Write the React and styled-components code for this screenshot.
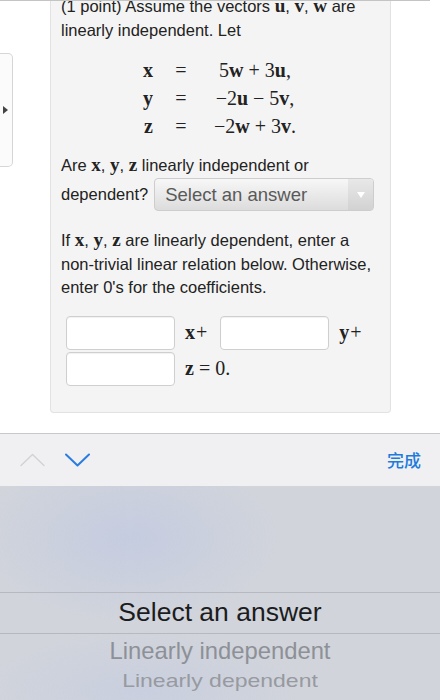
import styled, { createGlobalStyle } from "styled-components";

const Global = createGlobalStyle`
  html, body {
    margin: 0;
    padding: 0;
    background: #ffffff;
  }
  body {
    font-family: "Liberation Sans", Arial, sans-serif;
    color: #222;
  }
`;

const Page = styled.div`
  width: 440px;
  height: 700px;
  overflow: hidden;
  display: flex;
  flex-direction: column;
`;

const TopRule = styled.div`
  height: 1px;
  margin-right: 10px;
  background: #c4c4c4;
  position: relative;
  z-index: 1;
`;

const Main = styled.div`
  display: flex;
  align-items: flex-start;
`;

const SideTab = styled.div`
  width: 13px;
  height: 114px;
  margin-top: 52px;
  background: #fbfbfb;
  border: 1px solid #d6d6d6;
  border-left: none;
  border-radius: 0 5px 5px 0;
  display: flex;
  align-items: center;
  padding-left: 3px;
  box-sizing: border-box;

  &::before {
    content: "";
    border-left: 5px solid #444;
    border-top: 4px solid transparent;
    border-bottom: 4px solid transparent;
  }
`;

const Panel = styled.div`
  margin-left: 37px;
  width: 341px;
  box-sizing: border-box;
  background: #f4f4f4;
  border: 1px solid #e2e2e2;
  border-top: none;
  border-radius: 0 0 4px 4px;
  padding: 0 10px 26px 10px;
  font-size: 16.5px;
`;

const Para = styled.div`
  line-height: ${(p) => p.$lh || 24}px;
  margin-top: ${(p) => p.$mt || 0}px;
`;

const Vec = styled.b`
  font-family: "Liberation Serif", "Times New Roman", serif;
  font-weight: 700;
  font-size: 1.16em;
`;

const MathText = styled.span`
  font-family: "Liberation Serif", "Times New Roman", serif;
  font-size: 20px;
  white-space: nowrap;
`;

const EqTable = styled.div`
  margin-top: 14px;
  display: grid;
  grid-template-columns: 92px 56px 92px;
  grid-auto-rows: 28px;
  align-items: center;
  font-family: "Liberation Serif", "Times New Roman", serif;
  font-size: 20px;
`;

const EqLeft = styled.div`
  text-align: right;
`;

const EqMid = styled.div`
  text-align: center;
`;

const EqRight = styled.div`
  text-align: center;
  white-space: nowrap;
`;

const Op = styled.span`
  margin: 0 ${(p) => p.$gap || 5}px;
`;

const SelectRow = styled.div`
  margin-top: 1px;
  display: flex;
  align-items: center;
  gap: 6px;
`;

const SelectBox = styled.div`
  width: 220px;
  height: 33px;
  box-sizing: border-box;
  border: 1px solid #cdcdcd;
  border-radius: 4px;
  background: linear-gradient(#f7f7f7, #dcdcdc);
  display: flex;
  align-items: center;
  overflow: hidden;
`;

const SelectLabel = styled.span`
  flex: 1;
  padding-left: 10px;
  font-size: 18.5px;
  color: #595959;
`;

const SelectArrow = styled.span`
  width: 25px;
  height: 100%;
  background: linear-gradient(#e8e8e8, #d2d2d2);
  display: flex;
  align-items: center;
  justify-content: center;

  &::before {
    content: "";
    border-top: 6px solid #fff;
    border-left: 4px solid transparent;
    border-right: 4px solid transparent;
  }
`;

const InputRow = styled.div`
  margin-top: ${(p) => p.$mt}px;
  display: flex;
  align-items: center;
  padding-left: 5px;
`;

const Field = styled.div`
  width: 109px;
  height: 34px;
  box-sizing: border-box;
  background: #fff;
  border: 1px solid #cfcfcf;
  border-radius: 4px;
  box-shadow: inset 0 1px 1px rgba(0, 0, 0, 0.06);
`;

const FieldLabel = styled(MathText)`
  margin: 0 12px 0 10px;
`;

const Toolbar = styled.div`
  margin-top: 20px;
  height: 52px;
  border-top: 1px solid #c8c8cc;
  background: #f0f0f2;
  display: flex;
  align-items: center;
  padding: 0 19px 0 20px;
  gap: 19px;
`;

const Done = styled.span`
  margin-left: auto;
  font-family: "Noto Sans CJK SC", sans-serif;
  font-size: 17px;
  font-weight: 500;
  color: #1e7bdc;
`;

const Picker = styled.div`
  flex: 1;
  display: flex;
  flex-direction: column;
  background:
    radial-gradient(ellipse 150px 85px at 130px 52px, #c5cce0 0%, rgba(197, 204, 224, 0) 100%),
    radial-gradient(ellipse 160px 60px at 140px 205px, #c9cfdf 0%, rgba(201, 207, 223, 0) 100%),
    #d1d4db;
`;

const PickerSpacer = styled.div`
  height: 106px;
`;

const PickerSelected = styled.div`
  height: 40px;
  border-top: 1px solid #b6b9bf;
  border-bottom: 1px solid #b6b9bf;
  display: flex;
  align-items: center;
  justify-content: center;
  font-size: 26.5px;
  color: #1c1c1e;
`;

const PickerOption = styled.div`
  height: ${(p) => p.$h}px;
  display: flex;
  align-items: center;
  justify-content: center;
  font-size: ${(p) => p.$size}px;
  color: ${(p) => p.$color};
  transform: scaleY(${(p) => p.$squash || 1});
`;

const Chevron = ({ up }) => (
  <svg width="26" height="14" viewBox="0 0 26 14">
    <polyline
      points={up ? "1,12.5 12.5,1.5 24,12.5" : "1,1.5 12.5,12.5 24,1.5"}
      fill="none"
      stroke={up ? "#d2d2d4" : "#2a7de0"}
      strokeWidth={up ? 1.4 : 2}
      strokeLinecap="round"
      strokeLinejoin="round"
    />
  </svg>
);

export default function App() {
  return (
    <Page>
      <Global />
      <TopRule />
      <Main>
        <SideTab />
        <Panel>
          <Para style={{ marginTop: -7 }}>
            (1 point) Assume the vectors <Vec>u</Vec>, <Vec>v</Vec>, <Vec>w</Vec> are
            <br />
            linearly independent. Let
          </Para>

          <EqTable>
            <EqLeft><b>x</b></EqLeft>
            <EqMid>=</EqMid>
            <EqRight>5<b>w</b><Op>+</Op>3<b>u</b>,</EqRight>

            <EqLeft><b>y</b></EqLeft>
            <EqMid>=</EqMid>
            <EqRight>−2<b>u</b><Op>−</Op>5<b>v</b>,</EqRight>

            <EqLeft><b>z</b></EqLeft>
            <EqMid>=</EqMid>
            <EqRight>−2<b>w</b><Op>+</Op>3<b>v</b>.</EqRight>
          </EqTable>

          <Para $mt={13}>
            Are <Vec>x</Vec>, <Vec>y</Vec>, <Vec>z</Vec> linearly independent or
          </Para>
          <SelectRow>
            dependent?
            <SelectBox>
              <SelectLabel>Select an answer</SelectLabel>
              <SelectArrow />
            </SelectBox>
          </SelectRow>

          <Para $mt={17} $lh={23.5}>
            If <Vec>x</Vec>, <Vec>y</Vec>, <Vec>z</Vec> are linearly dependent, enter a
            non-trivial linear relation below. Otherwise, enter 0's for the
            coefficients.
          </Para>

          <InputRow $mt={16}>
            <Field />
            <FieldLabel><b>x</b><Op $gap={1}>+</Op></FieldLabel>
            <Field />
            <FieldLabel><b>y</b><Op $gap={1}>+</Op></FieldLabel>
          </InputRow>
          <InputRow $mt={2}>
            <Field />
            <FieldLabel><b>z</b><Op $gap={5}>=</Op>0.</FieldLabel>
          </InputRow>
        </Panel>
      </Main>

      <Toolbar>
        <Chevron up />
        <Chevron />
        <Done>完成</Done>
      </Toolbar>

      <Picker>
        <PickerSpacer />
        <PickerSelected>Select an answer</PickerSelected>
        <PickerOption $h={34} $size={23.8} $color="#8d9096">
          Linearly independent
        </PickerOption>
        <PickerOption $h={26} $size={23} $color="#979aa0" $squash={0.8}>
          Linearly dependent
        </PickerOption>
      </Picker>
    </Page>
  );
}
